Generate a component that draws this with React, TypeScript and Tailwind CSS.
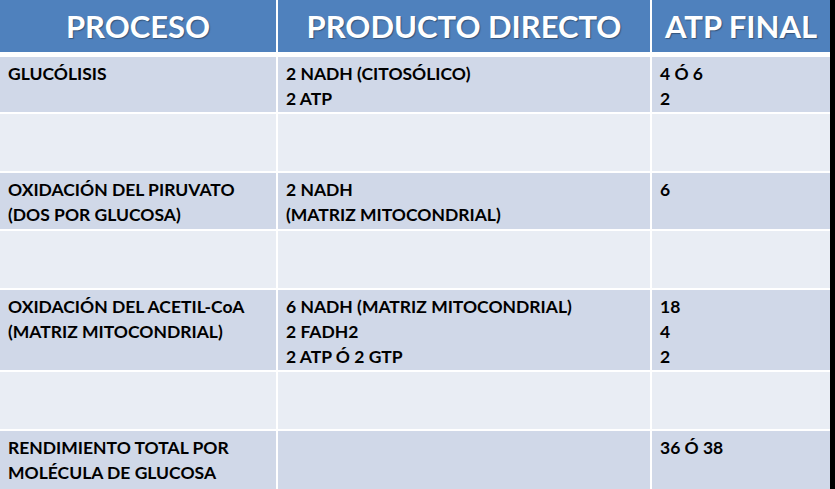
const rows: { a: string[]; b: string[]; c: string[]; h: string; dark: boolean }[] = [
  { a: ["GLUCÓLISIS"], b: ["2 NADH (CITOSÓLICO)", "2 ATP"], c: ["4 Ó 6", "2"], h: "h-[55px]", dark: true },
  { a: [], b: [], c: [], h: "h-[57px]", dark: false },
  { a: ["OXIDACIÓN DEL PIRUVATO", "(DOS POR GLUCOSA)"], b: ["2 NADH", "(MATRIZ MITOCONDRIAL)"], c: ["6"], h: "h-[56px]", dark: true },
  { a: [], b: [], c: [], h: "h-[57px]", dark: false },
  {
    a: ["OXIDACIÓN DEL ACETIL-CoA", "(MATRIZ MITOCONDRIAL)"],
    b: ["6 NADH (MATRIZ MITOCONDRIAL)", "2 FADH2", "2 ATP Ó 2 GTP"],
    c: ["18", "4", "2"],
    h: "h-[80px]",
    dark: true,
  },
  { a: [], b: [], c: [], h: "h-[57px]", dark: false },
  { a: ["RENDIMIENTO TOTAL POR", "MOLÉCULA DE GLUCOSA"], b: [], c: ["36 Ó 38"], h: "h-[58px]", dark: true },
];

function Cell({ lines, dark, w }: { lines: string[]; dark: boolean; w: string }) {
  return (
    <div className={`${w} ${dark ? "bg-[#d0d8e8]" : "bg-[#e9edf4]"} px-2 pt-[4px] text-[17.5px] leading-[25px] font-bold text-black`}>
      {lines.map((l, i) => (
        <div key={i} className="whitespace-nowrap">
          {l}
        </div>
      ))}
    </div>
  );
}

export default function App() {
  return (
    <div className="flex h-[489px] w-[835px] bg-black" style={{ fontFamily: "Lato, 'Open Sans', sans-serif" }}>
      <div className="flex w-[830px] flex-col gap-[2px] overflow-hidden bg-white">
        {/* Header */}
        <div className="mb-[3px] flex h-[52px] gap-[2px] text-[31px] font-bold text-white [text-shadow:1px_1px_1px_rgba(0,0,0,0.35)]">
          <div className="flex w-[276px] items-center justify-center bg-[#4f81bd]">PROCESO</div>
          <div className="flex w-[372px] items-center justify-center bg-[#4f81bd]">PRODUCTO DIRECTO</div>
          <div className="flex w-[178px] items-center justify-center bg-[#4f81bd]">ATP FINAL</div>
        </div>
        {rows.map((r, i) => (
          <div key={i} className={`flex ${r.h} shrink-0 gap-[2px]`}>
            <Cell lines={r.a} dark={r.dark} w="w-[276px]" />
            <Cell lines={r.b} dark={r.dark} w="w-[372px]" />
            <Cell lines={r.c} dark={r.dark} w="w-[178px]" />
          </div>
        ))}
      </div>
    </div>
  );
}
